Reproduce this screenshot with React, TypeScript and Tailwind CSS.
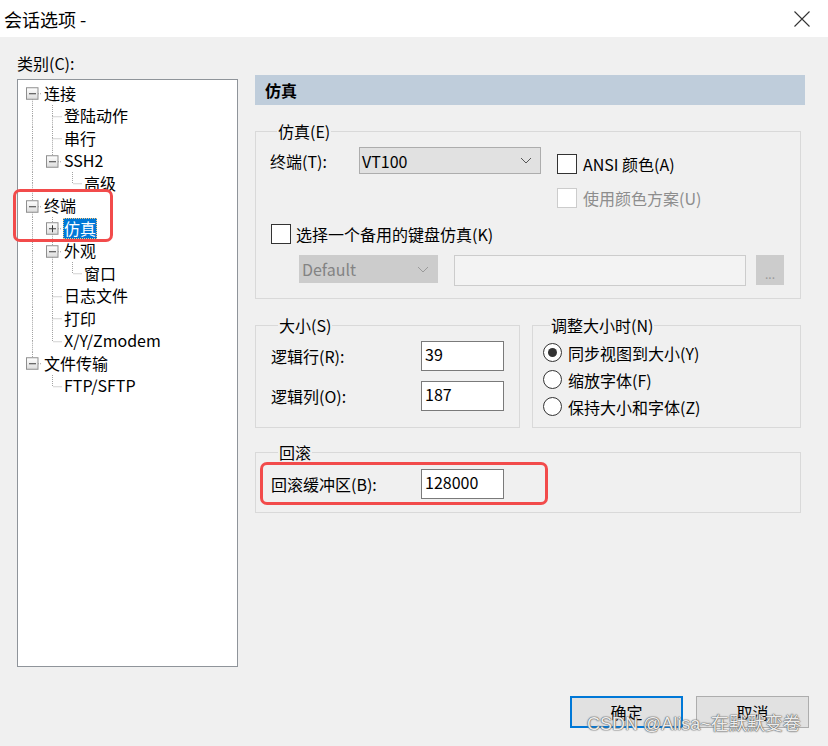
import React from 'react'

type Cell = { v?: 't' | 'b' | 'tb'; h?: boolean; box?: '-' | '+' }
type Row = { cells: Cell[]; label: string; selected?: boolean }

const ROW_H = 22.5
const MID = 11.25

const treeRows: Row[] = [
  { cells: [{ v: 'b', h: true, box: '-' }], label: '连接' },
  { cells: [{ v: 'tb' }, { v: 'tb', h: true }], label: '登陆动作' },
  { cells: [{ v: 'tb' }, { v: 'tb', h: true }], label: '串行' },
  { cells: [{ v: 'tb' }, { v: 't', h: true, box: '-' }], label: 'SSH2' },
  { cells: [{ v: 'tb' }, {}, { v: 't', h: true }], label: '高级' },
  { cells: [{ v: 'tb', h: true, box: '-' }], label: '终端' },
  { cells: [{ v: 'tb' }, { v: 'tb', h: true, box: '+' }], label: '仿真', selected: true },
  { cells: [{ v: 'tb' }, { v: 'tb', h: true, box: '-' }], label: '外观' },
  { cells: [{ v: 'tb' }, { v: 'tb' }, { v: 't', h: true }], label: '窗口' },
  { cells: [{ v: 'tb' }, { v: 'tb', h: true }], label: '日志文件' },
  { cells: [{ v: 'tb' }, { v: 'tb', h: true }], label: '打印' },
  { cells: [{ v: 'tb' }, { v: 't', h: true }], label: 'X/Y/Zmodem' },
  { cells: [{ v: 't', h: true, box: '-' }], label: '文件传输' },
  { cells: [{}, { v: 't', h: true }], label: 'FTP/SFTP' },
]

function TreeCell({ cell }: { cell: Cell }) {
  const dot = { stroke: '#a3a3a3', strokeWidth: 1, strokeDasharray: '1 1' }
  const gap = cell.box ? 6 : 0
  return (
    <svg width="20" height={ROW_H} className="shrink-0 block">
      {cell.v && cell.v.includes('t') && <line x1="10.5" y1="0" x2="10.5" y2={MID - gap} {...dot} />}
      {cell.v && cell.v.includes('b') && <line x1="10.5" y1={MID + gap} x2="10.5" y2={ROW_H} {...dot} />}
      {cell.h && <line x1={cell.box ? 16 : 11.5} y1={MID + 0.5} x2="20" y2={MID + 0.5} {...dot} />}
      {cell.box && (
        <g>
          <defs>
            <linearGradient id="bx" x1="0" y1="0" x2="0" y2="1">
              <stop offset="0" stopColor="#ffffff" />
              <stop offset="1" stopColor="#dcdcdc" />
            </linearGradient>
          </defs>
          <rect x="4.5" y={MID - 5.5} width="11.5" height="11.5" fill="url(#bx)" stroke="#8f8f8f" />
          <line x1="7" y1={MID + 0.5} x2="14" y2={MID + 0.5} stroke="#3c3c3c" />
          {cell.box === '+' && <line x1="10.5" y1={MID - 3} x2="10.5" y2={MID + 4} stroke="#3c3c3c" />}
        </g>
      )}
    </svg>
  )
}

function Tree() {
  return (
    <div className="mt-[5px] h-[588px] w-[221px] border border-[#8f949a] bg-white pl-[4px] pt-[2px]">
      {treeRows.map((r) => (
        <div key={r.label} className="flex h-[22.5px] items-center">
          {r.cells.map((c, i) => (
            <TreeCell key={i} cell={c} />
          ))}
          <span
            className={`ml-[1px] h-[21px] px-[1px] leading-[21px] whitespace-nowrap ${
              r.selected ? 'bg-[#0078d7] text-white outline-1 outline-dotted outline-[#f5c77e] -outline-offset-1' : 'text-black'
            }`}
          >
            {r.label}
          </span>
        </div>
      ))}
    </div>
  )
}

function Chevron({ color }: { color: string }) {
  return (
    <svg width="12" height="7" viewBox="0 0 12 7">
      <path d="M1 1 L6 6 L11 1" fill="none" stroke={color} strokeWidth="1" />
    </svg>
  )
}

function Check({ disabled }: { disabled?: boolean }) {
  return (
    <span
      className={`inline-block h-[20px] w-[20px] shrink-0 border bg-white ${
        disabled ? 'border-[#cccccc]' : 'border-[#333333]'
      }`}
    />
  )
}

function Radio({ on }: { on?: boolean }) {
  return (
    <span className="flex h-[19px] w-[19px] shrink-0 items-center justify-center rounded-full border border-[#333333] bg-white">
      {on && <span className="h-[9px] w-[9px] rounded-full bg-[#333333]" />}
    </span>
  )
}

function TextBox({ value }: { value: string }) {
  return (
    <div className="h-[30px] w-[83px] border border-[#7a7a7a] bg-white pl-[3px] leading-[24px] text-black">
      {value}
    </div>
  )
}

function Group({ title, className, children }: { title: string; className: string; children: React.ReactNode }) {
  return (
    <fieldset className={`border border-[#d9d9d9] ${className}`}>
      <legend className="ml-[7px] px-[1px] text-[16px] leading-[20px]">{title}</legend>
      {children}
    </fieldset>
  )
}

export default function App() {
  return (
    <div className="relative h-[746px] w-[828px] overflow-hidden bg-[#f0f0f0] font-['Noto_Sans_CJK_SC',sans-serif] text-[16px] text-black">
      {/* title bar */}
      <div className="flex h-[37px] items-center justify-between bg-white pl-[4px] pr-[18px]">
        <span className="text-[18px] leading-[24px]">会话选项 -</span>
        <svg width="16" height="16" viewBox="0 0 16 16">
          <path d="M0.5 0.5 L15.5 15.5 M15.5 0.5 L0.5 15.5" stroke="#333" strokeWidth="1.1" />
        </svg>
      </div>

      <div className="flex items-start pl-[17px]">
        {/* left: category tree */}
        <div className="flex w-[221px] flex-col">
          <div className="mt-[15px] h-[22px] leading-[22px]">类别(C):</div>
          <Tree />
        </div>

        {/* right: settings */}
        <div className="ml-[17px] w-[550px]">
          <div className="mt-[38px] flex h-[30px] items-center bg-[#bfcddb] px-[10px] font-bold">仿真</div>

          <Group title="仿真(E)" className="mt-[16px] w-[546px] pb-[12px] pl-[14px]">
            <div className="mt-[6px] flex items-start">
              <div className="flex h-[27px] w-[89px] items-center">终端(T):</div>
              <div className="flex h-[27px] w-[182px] items-center justify-between border border-[#adadad] bg-[#e1e1e1] pl-[2px] pr-[8px]">
                <span>VT100</span>
                <Chevron color="#555" />
              </div>
              <div className="ml-[16px] flex flex-col">
                <div className="mt-[7px] flex h-[20px] items-center gap-[6px]">
                  <Check />
                  <span>ANSI 颜色(A)</span>
                </div>
                <div className="mt-[14px] flex h-[20px] items-center gap-[6px] text-[#8d8d8d]">
                  <Check disabled />
                  <span>使用颜色方案(U)</span>
                </div>
              </div>
            </div>
            <div className="mt-[16px] ml-[1px] flex h-[20px] items-center gap-[5px]">
              <Check />
              <span>选择一个备用的键盘仿真(K)</span>
            </div>
            <div className="mt-[11px] ml-[29px] flex items-start">
              <div className="flex h-[28px] w-[139px] items-center justify-between bg-[#cccccc] pl-[3px] pr-[9px] text-[#838383]">
                <span>Default</span>
                <Chevron color="#9a9a9a" />
              </div>
              <div className="ml-[16px] h-[31px] w-[292px] border border-[#cccccc] bg-[#f3f3f3]" />
              <div className="ml-[10px] flex h-[30px] w-[28px] items-end justify-center border border-[#cccccc] bg-[#cccccc] pb-[4px] text-[12px] leading-[12px] text-[#9a9a9a]">
                ...
              </div>
            </div>
          </Group>

          <div className="mt-[16px] flex gap-[12px]">
            <Group title="大小(S)" className="h-[113px] w-[265px] pl-[15px]">
              <div className="mt-[6px] flex items-center">
                <span className="w-[150px]">逻辑行(R):</span>
                <TextBox value="39" />
              </div>
              <div className="mt-[10px] flex items-center">
                <span className="w-[150px]">逻辑列(O):</span>
                <TextBox value="187" />
              </div>
            </Group>
            <Group title="调整大小时(N)" className="h-[113px] w-[269px] pl-[10px]">
              <div className="mt-[8px] flex flex-col gap-[8px]">
                <div className="flex h-[19px] items-center gap-[6px]">
                  <Radio on />
                  <span>同步视图到大小(Y)</span>
                </div>
                <div className="flex h-[19px] items-center gap-[6px]">
                  <Radio />
                  <span>缩放字体(F)</span>
                </div>
                <div className="flex h-[19px] items-center gap-[6px]">
                  <Radio />
                  <span>保持大小和字体(Z)</span>
                </div>
              </div>
            </Group>
          </div>

          <Group title="回滚" className="mt-[14px] h-[71px] w-[546px] pl-[15px]">
            <div className="mt-[7px] flex items-center">
              <span className="w-[150px]">回滚缓冲区(B):</span>
              <TextBox value="128000" />
            </div>
          </Group>
        </div>
      </div>

      {/* dialog buttons */}
      <div className="mt-[29px] flex justify-end gap-[13px] pr-[19px]">
        <button className="h-[32px] w-[113px] border-2 border-[#0078d7] bg-[#e1e1e1]">确定</button>
        <button className="h-[32px] w-[113px] border border-[#adadad] bg-[#e1e1e1]">取消</button>
      </div>

      {/* annotations */}
      <div className="absolute left-[13px] top-[189px] h-[53px] w-[100px] rounded-[7px] border-[3px] border-[#f24b4b]" />
      <div className="absolute left-[260px] top-[462px] h-[43px] w-[288px] rounded-[7px] border-[3px] border-[#f24b4b]" />
      <div className="absolute left-[587px] top-[712px] whitespace-nowrap font-['Liberation_Sans','Noto_Sans_CJK_SC',sans-serif] text-[18px] leading-[24px] text-[#ececec] [text-shadow:0_0_1px_#555,0_0_1px_#555,0_0_2px_#888]">
        CSDN @Alisa~在默默变卷
      </div>
    </div>
  )
}
